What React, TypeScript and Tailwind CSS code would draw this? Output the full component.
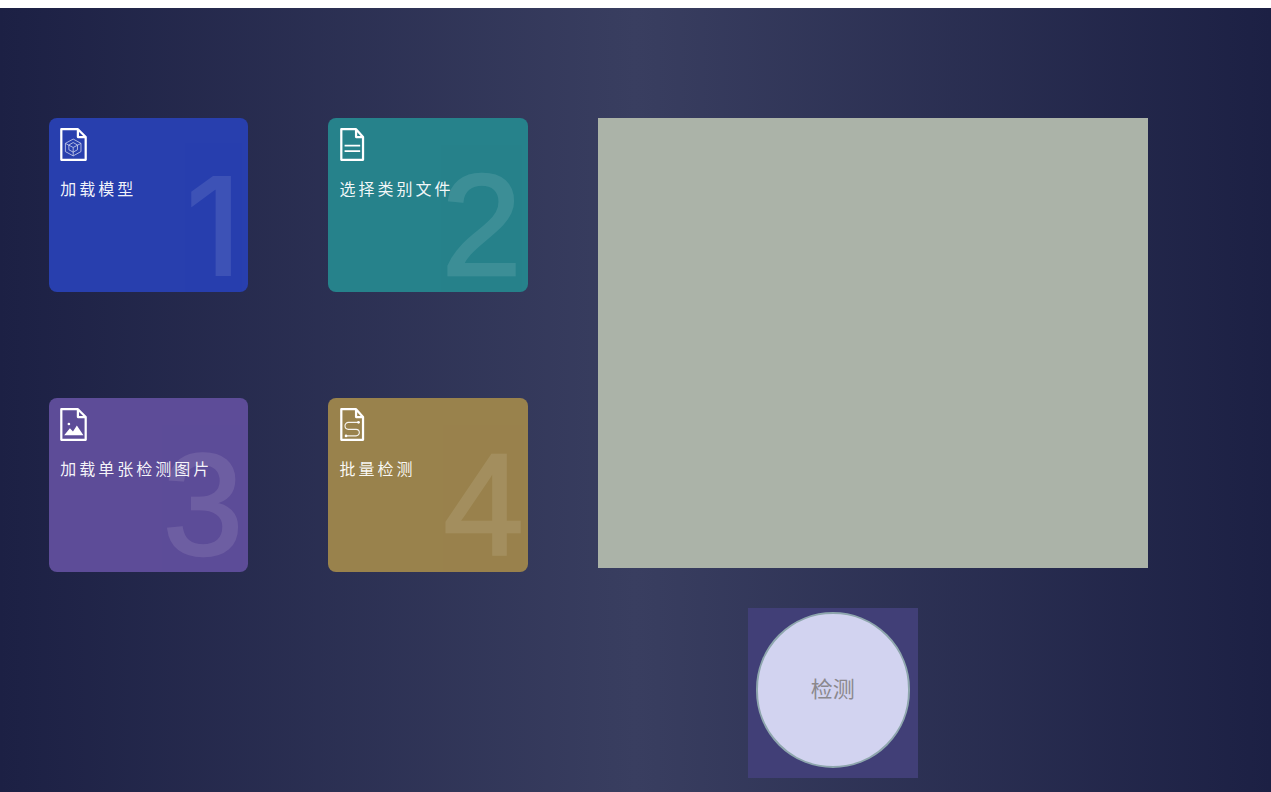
const FileShape = () => (
  <path d="M1.2 1.2H17.4L25 8.8V31H1.2Z M17.4 1.2V8.8H25" fill="none" stroke="#fff" strokeWidth="2.2" strokeLinejoin="round" />
);

const IconModel = () => (
  <svg width="27" height="33" viewBox="0 0 26.2 32.2" className="block">
    <FileShape />
    <g fill="none" stroke="#fff" strokeWidth="0.8" opacity="0.75">
      <path d="M12.8 10.8L20.4 15V23L12.8 27.2L5.2 23V15Z" />
      <path d="M12.8 14.2L17 16.6V21.2L12.8 23.6L8.6 21.2V16.6Z" />
      <path d="M5.2 15L12.8 19L20.4 15M12.8 19V27.2" />
    </g>
  </svg>
);

const IconDoc = () => (
  <svg width="27" height="33" viewBox="0 0 26.2 32.2" className="block">
    <path d="M1.2 1.2H15.6L22.4 8.8V31H1.2Z M15.6 1.2V8.8H22.4" fill="none" stroke="#fff" strokeWidth="2.2" strokeLinejoin="round" />
    <path d="M4.4 17.2H19.6M4.4 22.6H19.6" fill="none" stroke="#fff" strokeWidth="1.6" />
  </svg>
);

const IconImage = () => (
  <svg width="27" height="33" viewBox="0 0 26.2 32.2" className="block">
    <FileShape />
    <circle cx="8.6" cy="15.6" r="1.3" fill="#fff" />
    <path d="M4 26.6L9.6 19.8L12.6 23L16.4 17L22.8 26.6Z" fill="#fff" />
  </svg>
);

const IconFlow = () => (
  <svg width="27" height="33" viewBox="0 0 26.2 32.2" className="block">
    <path d="M1.2 1.2H15.6L22.4 8.8V31H1.2Z M15.6 1.2V8.8H22.4" fill="none" stroke="#fff" strokeWidth="2.2" strokeLinejoin="round" />
    <path d="M17.6 14H8.2a3.4 3.4 0 0 0 0 6.8H15.6a3.2 3.2 0 0 1 0 6.4H6.4" fill="none" stroke="#fff" strokeWidth="1.1" opacity="0.9" />
    <circle cx="18" cy="14" r="1.3" fill="#fff" />
    <circle cx="5.8" cy="27.2" r="1.3" fill="#fff" />
  </svg>
);

const helvetica = "font-['Liberation_Sans',sans-serif] text-[144px] leading-[144px] [-webkit-text-stroke:2.5px_white] bottom-[-6px]";

const cards = [
  { title: "加载模型", digit: "1", bg: "bg-[#283fae]", icon: <IconModel />, digitClass: "font-['Inter',sans-serif] text-[137px] leading-[144px] font-medium bottom-[-6px] right-[6px]" },
  { title: "选择类别文件", digit: "2", bg: "bg-[#26828b]", icon: <IconDoc />, digitClass: `${helvetica} right-[6px]` },
  { title: "加载单张检测图片", digit: "3", bg: "bg-[#5d4c98]", icon: <IconImage />, digitClass: `${helvetica} right-[5px]` },
  { title: "批量检测", digit: "4", bg: "bg-[#99824c]", icon: <IconFlow />, digitClass: `${helvetica} right-[4px]` },
];

export default function App() {
  return (
    <div className="bg-white pt-2">
      <main className="flex h-[784px] overflow-hidden bg-[linear-gradient(to_right,#1c2044,#393e60_50%,#1c2044)] pt-[110px] pl-[48.6px]">
        <div className="grid grid-cols-[199.4px_199.7px] grid-rows-[174px_174px] gap-x-[80px] gap-y-[106px] self-start">
          {cards.map((c) => (
            <div key={c.digit} className={`relative overflow-hidden rounded-lg ${c.bg} pt-[10px] pl-[11.6px]`}>
              <span className={`absolute text-white opacity-10 ${c.digitClass}`}>
                {c.digit}
              </span>
              <div className="relative">{c.icon}</div>
              <p className="relative mt-[15px] font-['Noto_Sans_CJK_SC',sans-serif] text-base leading-6 tracking-[3px] text-white/95">
                {c.title}
              </p>
            </div>
          ))}
        </div>
        <div className="ml-[70px] flex flex-col">
          <div className="h-[450px] w-[550px] bg-[#abb3a8]" />
          <div className="mt-[40px] ml-[150px] flex h-[170px] w-[170px] items-start justify-center bg-[#413f77] pt-[4px]">
            <button className="h-[156px] w-[154px] rounded-full border-2 border-[#8ea6ad] bg-[#d2d3f0] pb-[5px] font-['Noto_Sans_CJK_SC',sans-serif] text-[22px] text-[#8b888d]">
              检测
            </button>
          </div>
        </div>
      </main>
    </div>
  );
}
